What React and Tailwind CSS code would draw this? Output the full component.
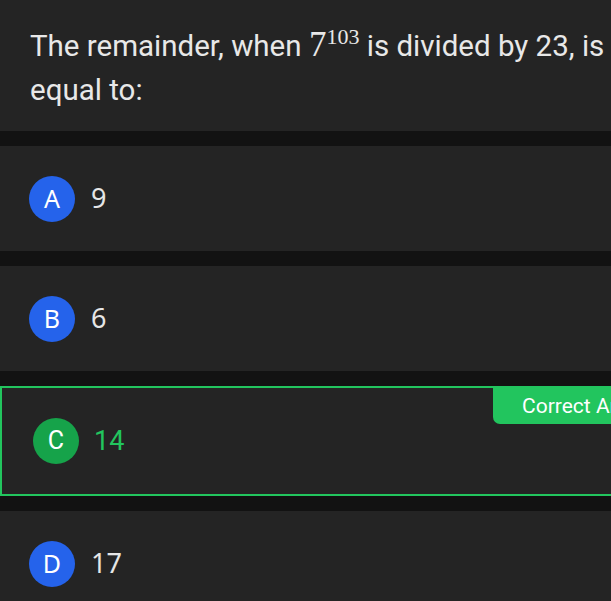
import React from "react";

const options = [
  { key: "A", value: "9" },
  { key: "B", value: "6" },
  { key: "C", value: "14", correct: true },
  { key: "D", value: "17" },
];

const Option = ({ opt }) => {
  if (opt.correct) {
    return (
      <div className="relative flex h-[110px] items-center gap-[15px] border-2 border-[#22c55e] bg-[#242424] pl-[31px]">
        <div className="absolute left-[491px] top-0 whitespace-nowrap rounded-bl-[7px] bg-[#22c55e] py-[4px] pl-[29px] pr-[20px] text-[21px] leading-[28px] text-white">
          Correct Answer
        </div>
        <span className="flex h-[46px] w-[46px] items-center justify-center rounded-full bg-[#16a34a] text-[25px] text-white">
          {opt.key}
        </span>
        <span className="text-[27px] text-[#22c55e]">{opt.value}</span>
      </div>
    );
  }
  return (
    <div className="flex h-[105px] items-center gap-[16px] bg-[#242424] pl-[29px]">
      <span className="flex h-[46px] w-[46px] items-center justify-center rounded-full bg-[#2563eb] font-['Noto_Sans',sans-serif] text-[25px] text-white">
        {opt.key}
      </span>
      <span className="font-['Noto_Sans',sans-serif] text-[27px] text-[#e6e6e6]">
        {opt.value}
      </span>
    </div>
  );
};

export default function App() {
  return (
    <div className="h-[601px] w-[611px] overflow-hidden bg-[#121212] font-['Roboto',sans-serif]">
      <div className="flex w-[700px] flex-col gap-[15px]">
        <div className="h-[131px] bg-[#242424] pl-[30px] pt-[23px]">
          <p className="w-[600px] text-[29.5px] leading-[44px] text-[#e8e8e8]">
            The remainder, when{" "}
            <span className="font-['Liberation_Serif',serif] text-[35px]">
              7<sup className="top-[-0.55em] text-[22px]">103</sup>
            </span>{" "}
            is divided by 23, is equal to:
          </p>
        </div>
        {options.map((opt) => (
          <Option key={opt.key} opt={opt} />
        ))}
      </div>
    </div>
  );
}
